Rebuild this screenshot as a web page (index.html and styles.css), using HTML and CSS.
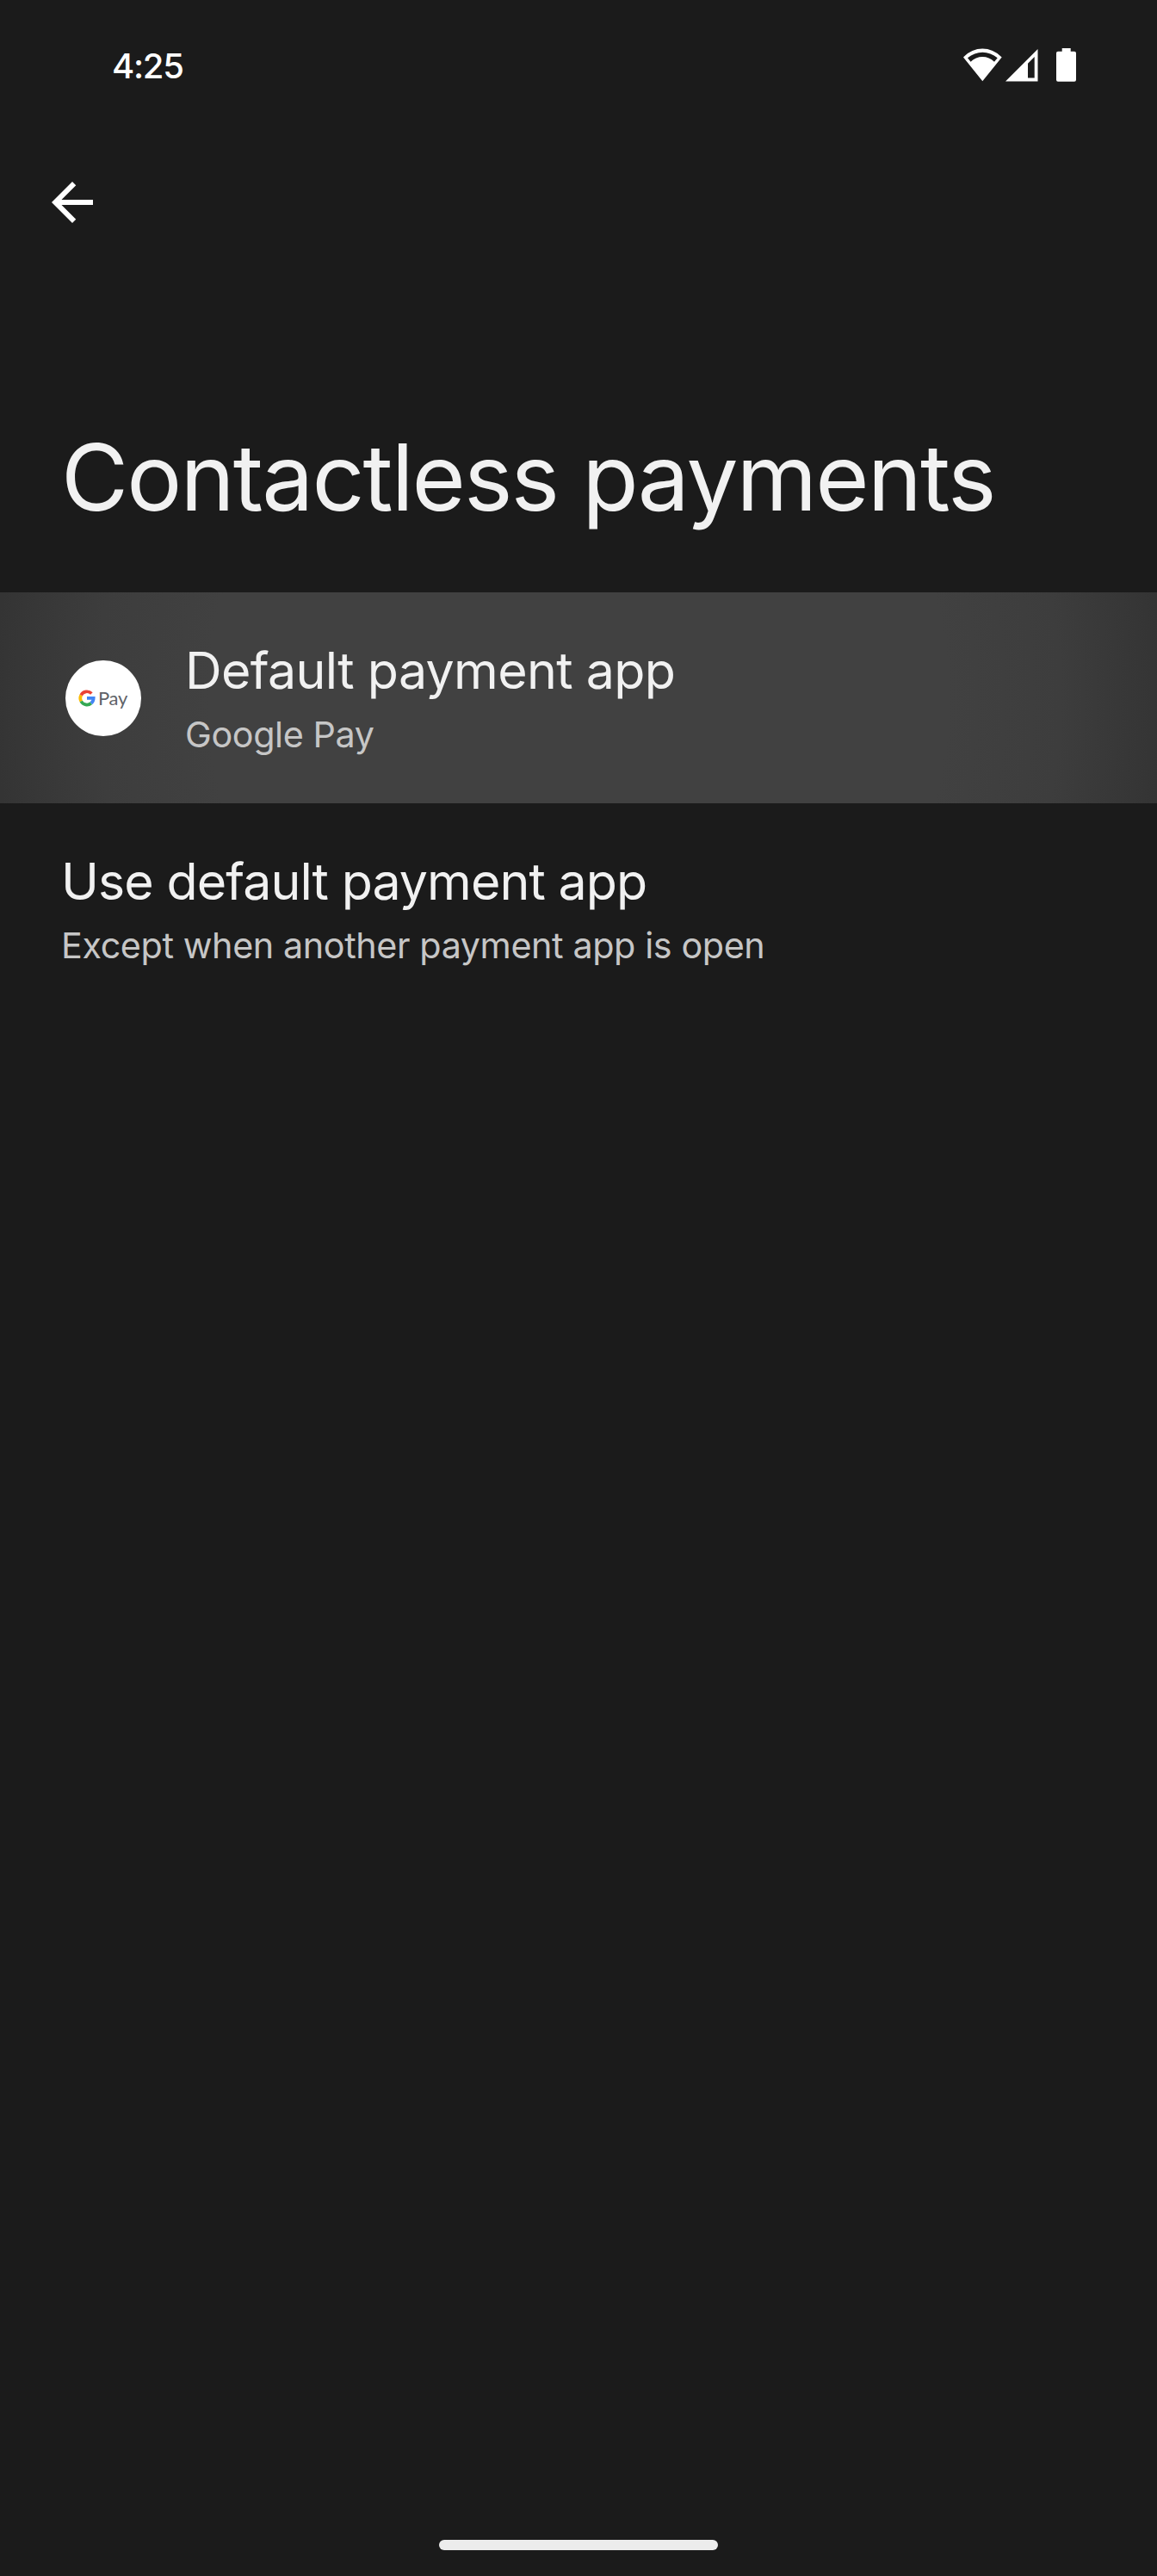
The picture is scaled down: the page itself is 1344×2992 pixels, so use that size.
FILE: index.html
```
<!DOCTYPE html>
<html lang="en">
<head>
  <meta charset="UTF-8" />
  <meta name="viewport" content="width=device-width, initial-scale=1" />
  <title>Contactless payments</title>
  <link rel="stylesheet" href="styles.css">
</head>
<body>
  <div class="screen">
    <div class="status-bar">
      <span class="clock">4:25</span>
      <svg class="status-icons" width="132" height="40" viewBox="19 17 132 40" fill="#fff" fill-rule="evenodd">
        <!-- wifi -->
        <path d="M19 27.5C32 14.2 50.5 14.2 63.7 27.5L41.3 55.2ZM24 28.3L27.6 32.7C35 25.1 47.6 25.1 55 32.7L58.7 28.3C48.5 19.5 34.2 19.5 24 28.3Z"/>
        <!-- signal -->
        <path d="M105.5 18V55.5H68ZM101.7 27L94 34.7V51.4H101.7Z"/>
        <!-- battery -->
        <path d="M133.7 17H143.7V20.7H148Q150 20.7 150 22.7V53.7Q150 55.7 148 55.7H129Q127 55.7 127 53.7V22.7Q127 20.7 129 20.7H133.7Z"/>
      </svg>
    </div>

    <div class="toolbar">
      <svg class="back" width="72" height="72" viewBox="0 0 24 24" fill="#fff">
        <path d="M20 11H7.83l5.59-5.59L12 4l-8 8 8 8 1.41-1.41L7.83 13H20v-2z"/>
      </svg>
    </div>

    <h1>Contactless payments</h1>

    <div class="row pressed">
      <svg class="app-icon" width="88" height="88" viewBox="0 0 88 88">
        <circle cx="44" cy="44" r="44" fill="#fff"/>
        <g fill="none" stroke-width="3.7">
          <path stroke="#fbbc04" d="M18.2 47.5A7.7 7.7 0 0 1 18.2 40.3"/>
          <path stroke="#ea4335" d="M18.2 40.3A7.7 7.7 0 0 1 30.4 38.5"/>
          <path stroke="#34a853" d="M29.9 49.8A7.7 7.7 0 0 1 18.2 47.5"/>
          <path stroke="#4285f4" d="M25 43.9H32.7A7.7 7.7 0 0 1 29.9 49.8"/>
        </g>
        <text class="pay" x="38" y="52.4">Pay</text>
      </svg>
      <div class="text">
        <div class="title">Default payment app</div>
        <div class="summary">Google Pay</div>
      </div>
    </div>

    <div class="row">
      <div class="text">
        <div class="title use">Use default payment app</div>
        <div class="summary">Except when another payment app is open</div>
      </div>
    </div>

    <div class="nav-handle"></div>
  </div>
</body>
</html>
```
FILE: styles.css
```
body {
  margin: 0;
  background: #1b1b1b;
  color: #f1f1f1;
  font-family: Inter, Roboto, sans-serif;
}

.screen {
  display: flex;
  flex-direction: column;
  height: 2992px;
  overflow: hidden;
}

.status-bar {
  display: flex;
  justify-content: space-between;
  align-items: center;
  height: 152px;
  padding: 0 93px 0 130px;
  color: #fff;
}

.clock {
  padding-top: 2px;
  font-size: 40px;
  font-weight: 500;
  line-height: 48px;
  letter-spacing: -1.3px;
}

.toolbar {
  display: flex;
  align-items: center;
  height: 166px;
  padding: 0 48px;
}

.back {
  display: block;
}

h1 {
  margin: 172px 71px 70px;
  font-size: 107px;
  font-weight: 400;
  line-height: 128px;
  letter-spacing: -1.95px;
  white-space: nowrap;
}

.row {
  display: flex;
  align-items: center;
  gap: 51px;
  height: 245px;
  padding: 0 71px;
}

.row.pressed {
  padding-left: 76px;
  background: radial-gradient(circle at 50% 50%, #414141 430px, #3d3d3d 560px, #343434 680px);
}

.app-icon {
  flex: none;
}

.pay {
  font-family: Lato, sans-serif;
  font-size: 22px;
  letter-spacing: -0.3px;
  fill: #5f6368;
}

.title {
  font-size: 59.1px;
  line-height: 72px;
  letter-spacing: -0.68px;
  white-space: nowrap;
}

.title.use {
  letter-spacing: -0.95px;
}

.summary {
  margin-top: 13.5px;
  font-size: 41.3px;
  line-height: 50px;
  letter-spacing: -0.4px;
  color: #c6c6c6;
  white-space: nowrap;
}

.nav-handle {
  width: 324px;
  height: 12px;
  margin: auto auto 30px;
  border-radius: 6px;
  background: #ececec;
}
```
